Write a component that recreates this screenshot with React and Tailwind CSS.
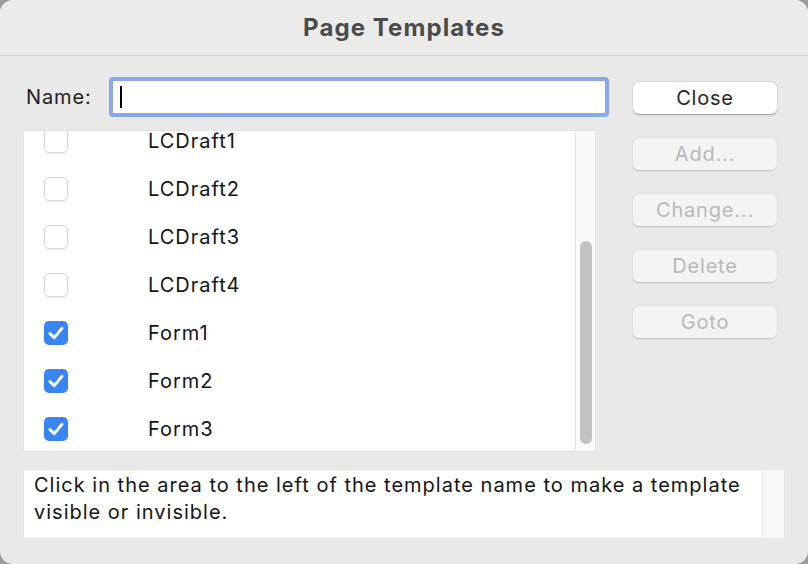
import React from "react";

const templates = [
  { name: "LCDraft1", on: false },
  { name: "LCDraft2", on: false },
  { name: "LCDraft3", on: false },
  { name: "LCDraft4", on: false },
  { name: "Form1", on: true },
  { name: "Form2", on: true },
  { name: "Form3", on: true },
];

const Check = ({ on }) =>
  on ? (
    <span className="w-6 h-6 rounded-[5px] bg-[#3a85f6] flex items-center justify-center shrink-0">
      <svg width="24" height="24" viewBox="0 0 24 24" fill="none">
        <path d="M6 12.6 L10.2 16.6 L18 7.4" stroke="white" strokeWidth="3" strokeLinecap="round" strokeLinejoin="round" />
      </svg>
    </span>
  ) : (
    <span className="w-6 h-6 rounded-[5px] bg-white border border-[#d6d6d6] shadow-[0_1px_1px_rgba(0,0,0,0.06)] shrink-0" />
  );

const SideButton = ({ children, active }) => (
  <button
    className={
      active
        ? "w-[144px] h-[32px] rounded-[6px] bg-white text-[#262626] shadow-[0_0.5px_1.5px_rgba(0,0,0,0.35)] text-[20px] tracking-[0.8px]"
        : "w-[144px] h-[32px] rounded-[6px] bg-[#f3f4f3] text-[#b9b9b9] shadow-[0_0.5px_1.5px_rgba(0,0,0,0.18)] text-[20px] tracking-[0.8px]"
    }
  >
    {children}
  </button>
);

export default function App() {
  return (
    <div className="w-[808px] h-[564px] bg-[#9c9c9c] overflow-hidden" style={{ fontFamily: "Inter, 'Liberation Sans', sans-serif" }}>
      <div className="w-full h-full rounded-[13px] bg-[#e8e9e8] flex flex-col overflow-hidden">
        <div className="h-[56px] shrink-0 bg-[#ebecea] border-b border-[#d2d2d2] flex items-center justify-center">
          <span className="text-[24px] font-bold text-[#4b4b4b] tracking-[1.1px]">Page Templates</span>
        </div>

        <div className="flex items-center pl-[23px] pt-[21px]">
          <span className="text-[20px] tracking-[0.9px] text-[#1f1f1f] pl-[3px] w-[86px]">Name:</span>
          <div className="w-[500px] h-[40px] rounded-[4px] bg-[#88a8eb] p-[4px]">
            <div className="w-full h-full bg-white flex items-center pl-[7px]">
              <span className="w-[2px] h-[22px] bg-black" />
            </div>
          </div>
          <div className="ml-[24px] pt-[1px]">
            <SideButton active>Close</SideButton>
          </div>
        </div>

        <div className="flex pl-[23px] pt-[13px] gap-[37px]">
          <div className="w-[573px] h-[322px] bg-white border border-[#e3e3e3] flex overflow-hidden">
            <div className="flex-1 flex flex-col -mt-[14px]">
              {templates.map((t) => (
                <div key={t.name} className="h-[48px] shrink-0 flex items-center pl-[20px]">
                  <Check on={t.on} />
                  <span className="ml-[80px] text-[20px] tracking-[1px] text-[#141414]">{t.name}</span>
                </div>
              ))}
            </div>
            <div className="w-[20px] bg-[#fafafa] border-l border-[#e6e6e6] pt-[110px] pb-[8px] flex justify-center">
              <div className="w-[12px] h-[203px] rounded-full bg-[#c2c2c2]" />
            </div>
          </div>

          <div className="flex flex-col gap-[24px] pt-[8px]">
            <SideButton>Add...</SideButton>
            <SideButton>Change...</SideButton>
            <SideButton>Delete</SideButton>
            <SideButton>Goto</SideButton>
          </div>
        </div>

        <div className="mx-[23px] mt-[17px] h-[70px] bg-white border border-[#e3e3e3] flex">
          <div className="flex-1 px-[10px] pt-[2px] text-[20px] tracking-[1px] leading-[27px] text-[#141414]">
            Click in the area to the left of the template name to make a template visible or invisible.
          </div>
          <div className="w-[22px] bg-[#f8f8f8] border-l border-[#e6e6e6]" />
        </div>
      </div>
    </div>
  );
}
